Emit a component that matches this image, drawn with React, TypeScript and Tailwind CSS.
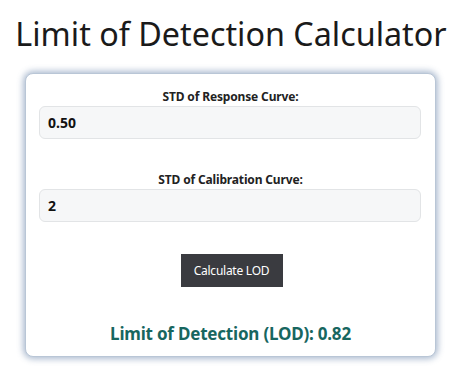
import React from "react";

export default function App() {
  const font = { fontFamily: '"Segoe UI", "Noto Sans", "Open Sans", sans-serif' };
  return (
    <div className="w-[474px] h-[387px] bg-white overflow-hidden" style={font}>
      <h1 className="ml-[15px] w-[432px] text-center text-[32.3px] leading-[40px] pt-[13px] text-[#1a1a1a] font-normal whitespace-nowrap">
        Limit of Detection Calculator
      </h1>
      <div className="ml-[25px] mt-[20px] w-[411px] h-[284px] rounded-[8px] border border-[#b9c6d6] bg-white shadow-[0_0_6px_2px_rgba(70,105,150,0.45)] px-[13px] pt-[14px]">
        <label className="block text-center text-[12px] tracking-[-0.15px] leading-[18px] font-bold text-[#222]">
          STD of Response Curve:
        </label>
        <div className="h-[33px] w-[382px] rounded-[6px] border border-[#e2e4e6] bg-[#f6f7f8] flex items-center px-[8px] text-[14px] font-bold text-[#111]">
          0.50
        </div>
        <label className="block mt-[32px] text-center text-[12px] tracking-[-0.15px] leading-[18px] font-bold text-[#222]">
          STD of Calibration Curve:
        </label>
        <div className="h-[33px] w-[382px] rounded-[6px] border border-[#e2e4e6] bg-[#f6f7f8] flex items-center px-[8px] text-[14px] font-bold text-[#111]">
          2
        </div>
        <div className="mt-[32px] flex justify-center">
          <button className="h-[33px] w-[102px] bg-[#3a3b40] text-white text-[12px] tracking-[-0.25px] ml-[2px]">
            Calculate LOD
          </button>
        </div>
        <div className="mt-[35px] text-center text-[17px] tracking-[-0.2px] leading-[24px] font-bold text-[#17665f]">
          Limit of Detection (LOD): 0.82
        </div>
      </div>
    </div>
  );
}
